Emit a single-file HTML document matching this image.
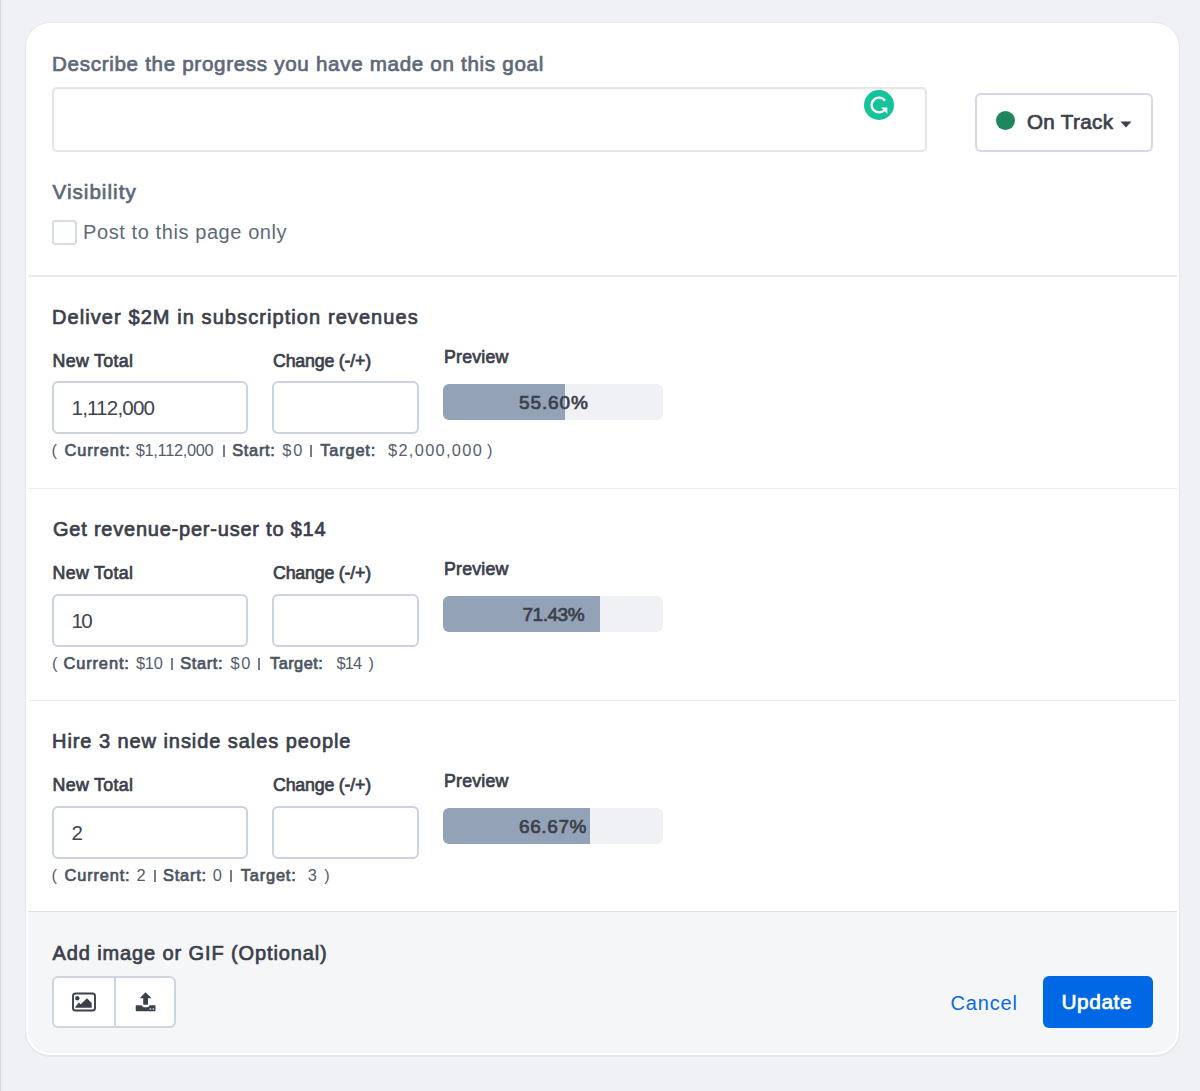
<!DOCTYPE html>
<html><head><meta charset="utf-8"><style>
html,body{margin:0;padding:0;}
body{width:1200px;height:1091px;background:#eff1f5;position:relative;overflow:hidden;font-family:"Liberation Sans",sans-serif;}
.edge{position:absolute;left:0;top:0;width:1px;height:1091px;background:#d2dae4;}
.edge2{position:absolute;left:1px;top:0;width:2px;height:1091px;background:#e9edf2;}
.card{position:absolute;left:24.5px;top:21.5px;width:1155.5px;height:1035.5px;border-radius:25px;background:#e5e7eb;}
.cardw{position:absolute;left:25.5px;top:23px;width:1153px;height:1031.5px;border-radius:24px;background:#fff;overflow:hidden;}
.footer{position:absolute;left:2.5px;top:888px;width:1149px;height:141px;background:#f5f6f8;border-top:1px solid #dce0e6;border-radius:0 0 22px 22px;}
.div1{position:absolute;left:28px;top:275px;width:1149px;height:2px;background:#e6e9ed;}
.div2{position:absolute;left:28px;width:1149px;height:1px;background:#eceef1;}
.t{position:absolute;white-space:pre;}
.t b{font-weight:700;color:#4d5665;}
.pipe{position:absolute;width:2px;height:11.5px;background:#737c89;}
.ta{position:absolute;box-sizing:border-box;left:52px;top:87px;width:875px;height:65px;border:2px solid #e6e6e6;border-radius:5px;background:#fff;box-shadow:inset 0 1px 2px rgba(0,0,0,0.04);}
.inp{position:absolute;box-sizing:border-box;border:2px solid #cad3df;border-radius:6px;background:#fff;}
.bar{position:absolute;width:220px;height:36px;border-radius:6px;background:#eff1f5;overflow:hidden;}
.fill{position:absolute;left:0;top:0;height:36px;background:#93a2b7;}
.btn{position:absolute;box-sizing:border-box;border:1.5px solid #c6cfdc;border-radius:6px;background:#fff;}
</style></head><body>
<div class="edge"></div><div class="edge2"></div>
<div class="card"></div>
<div class="cardw">
  <div class="footer"></div>
</div>
<div class="div1"></div>
<div class="ta"></div>
<svg style="position:absolute;left:864px;top:90px" width="30" height="30" viewBox="0 0 30 30">
  <circle cx="15" cy="15" r="15" fill="#15c39a"/>
  <path d="M21.06 10.76 A7.4 7.4 0 1 0 20.23 20.23" fill="none" stroke="#fff" stroke-width="2.4"/>
  <path d="M17.1 17.5 L23.3 17.5 L23.3 23.75 Z" fill="#fff"/>
</svg>
<div class="btn" style="left:975px;top:93px;width:178px;height:59px;border:2px solid #d2d9e4;"></div>
<div style="position:absolute;left:996px;top:111px;width:19px;height:19px;border-radius:50%;background:#1d875e"></div>
<svg style="position:absolute;left:1120px;top:121px" width="12" height="7" viewBox="0 0 12 7"><path d="M0.5 0.5 L11.5 0.5 L6 6.5 Z" fill="#3b404b"/></svg>
<div class="inp" style="left:52px;top:219.5px;width:25px;height:25px;border-radius:3px;border:2px solid #d5dce6"></div>

<div class="inp" style="left:52px;top:381px;width:196px;height:53px"></div>
<div class="inp" style="left:272px;top:381px;width:147px;height:53px"></div>
<div class="bar" style="left:443px;top:384px"><div class="fill" style="width:122.3px"></div></div>
<div class="div2" style="top:488px"></div>
<div class="inp" style="left:52px;top:594px;width:196px;height:53px"></div>
<div class="inp" style="left:272px;top:594px;width:147px;height:53px"></div>
<div class="bar" style="left:443px;top:596px"><div class="fill" style="width:157.1px"></div></div>
<div class="div2" style="top:700px"></div>
<div class="inp" style="left:52px;top:806px;width:196px;height:53px"></div>
<div class="inp" style="left:272px;top:806px;width:147px;height:53px"></div>
<div class="bar" style="left:443px;top:808px"><div class="fill" style="width:146.7px"></div></div>

<div class="btn" style="left:52px;top:976px;width:124px;height:52px;border:2px solid #cdd5e1;"></div>
<div style="position:absolute;left:114px;top:977px;width:2px;height:50px;background:#cdd5e1"></div>
<svg style="position:absolute;left:70px;top:990px" width="28" height="24" viewBox="0 0 28 24">
  <rect x="3" y="3.5" width="22" height="17" rx="2.6" fill="none" stroke="#3b404b" stroke-width="1.9"/>
  <circle cx="7.3" cy="8.2" r="2.2" fill="#3b404b"/>
  <path d="M5.3 17.7 L5.3 17 L8.8 12.5 L10.7 14.2 L17 8.2 L21.7 13 L21.7 17.7 Z" fill="#3b404b"/>
</svg>
<svg style="position:absolute;left:130px;top:990px" width="30" height="24" viewBox="0 0 30 24">
  <path d="M15.5 2.2 L21.5 8.3 L18 8.3 L18 14 Q18 14.7 17.3 14.7 L13.9 14.7 Q13.2 14.7 13.2 14 L13.2 8.3 L9.7 8.3 Z" fill="#3b404b"/>
  <path d="M5.7 16 Q5.7 15.2 6.5 15.2 L11 15.2 Q11.8 15.2 12.3 16 Q12.8 17.2 14 17.2 L17.5 17.2 Q18.6 17.2 19.1 16 Q19.6 15.2 20.4 15.2 L24.7 15.2 Q25.5 15.2 25.5 16 L25.5 20.4 Q25.5 21.2 24.7 21.2 L6.5 21.2 Q5.7 21.2 5.7 20.4 Z" fill="#3b404b"/>
  <rect x="19.6" y="18.2" width="1.6" height="1.6" fill="#c9ccd2"/>
  <rect x="22.6" y="18.2" width="1.6" height="1.6" fill="#c9ccd2"/>
</svg>
<div style="position:absolute;left:1043px;top:976px;width:110px;height:52px;border-radius:6px;background:#0067e5"></div>
<div class="pipe" style="left:222.8px;top:445px"></div><div class="pipe" style="left:310.3px;top:445px"></div><div class="pipe" style="left:171.3px;top:658px"></div><div class="pipe" style="left:257.9px;top:658px"></div><div class="pipe" style="left:153.8px;top:870px"></div><div class="pipe" style="left:230.3px;top:870px"></div><div class="t" id="t_desc" style="left:52.00px;top:54.16px;font-weight:400;-webkit-text-stroke:0.7px #5d6979;font-size:20.6px;line-height:20.6px;color:#5d6979;letter-spacing:0.685px">Describe the progress you have made on this goal</div><div class="t" id="t_vis" style="left:52.50px;top:181.86px;font-weight:400;-webkit-text-stroke:0.7px #5d6979;font-size:20.6px;line-height:20.6px;color:#5d6979;letter-spacing:1.022px">Visibility</div><div class="t" id="t_post" style="left:83.00px;top:222.27px;font-weight:400;font-size:20px;line-height:20px;color:#5d6979;letter-spacing:0.590px">Post to this page only</div><div class="t" id="t_ontrack" style="left:1027.00px;top:111.96px;font-weight:400;-webkit-text-stroke:0.7px #3b404b;font-size:20.6px;line-height:20.6px;color:#3b404b;letter-spacing:0.343px">On Track</div><div class="t" id="t_add" style="left:52.50px;top:942.67px;font-weight:400;-webkit-text-stroke:0.7px #3b404b;font-size:20px;line-height:20px;color:#3b404b;letter-spacing:0.885px">Add image or GIF (Optional)</div><div class="t" id="t_cancel" style="left:950.50px;top:992.57px;font-weight:400;font-size:20px;line-height:20px;color:#0b69df;letter-spacing:0.840px">Cancel</div><div class="t" id="t_update" style="left:1061.50px;top:991.69px;font-weight:400;-webkit-text-stroke:0.7px #ffffff;font-size:20.8px;line-height:20.8px;color:#ffffff;letter-spacing:0.600px">Update</div><div class="t" id="s0_title" style="left:52.00px;top:306.87px;font-weight:400;-webkit-text-stroke:0.7px #3b404b;font-size:20px;line-height:20px;color:#3b404b;letter-spacing:1.080px">Deliver $2M in subscription revenues</div><div class="t" id="s0_new" style="left:52.50px;top:352.83px;font-weight:400;-webkit-text-stroke:0.7px #3b404b;font-size:17.8px;line-height:17.8px;color:#3b404b;letter-spacing:0.325px">New Total</div><div class="t" id="s0_chg" style="left:273.00px;top:352.83px;font-weight:400;-webkit-text-stroke:0.7px #3b404b;font-size:17.8px;line-height:17.8px;color:#3b404b;letter-spacing:-0.200px">Change (-/+)</div><div class="t" id="s0_prev" style="left:444.00px;top:348.73px;font-weight:400;-webkit-text-stroke:0.7px #3b404b;font-size:17.8px;line-height:17.8px;color:#3b404b;letter-spacing:0.200px">Preview</div><div class="t" id="s0_val" style="left:71.50px;top:397.76px;font-weight:400;font-size:20.6px;line-height:20.6px;color:#3f4450;letter-spacing:-0.825px">1,112,000</div><div class="t" id="s0_pct" style="left:519.00px;top:392.67px;font-weight:400;-webkit-text-stroke:0.7px #3b404b;font-size:19px;line-height:19px;color:#3b404b;letter-spacing:0.880px">55.60%</div><div class="t" id="s0_ip0" style="left:51.50px;top:441.72px;font-weight:400;font-size:16.4px;line-height:16.4px;color:#545e6c;letter-spacing:0.000px">(</div><div class="t" id="s0_ip1" style="left:64.50px;top:441.72px;font-weight:400;-webkit-text-stroke:0.7px #4b5462;font-size:16.4px;line-height:16.4px;color:#4b5462;letter-spacing:0.857px">Current:</div><div class="t" id="s0_ip2" style="left:135.80px;top:441.72px;font-weight:400;font-size:16.4px;line-height:16.4px;color:#545e6c;letter-spacing:-0.328px">$1,112,000</div><div class="t" id="s0_ip4" style="left:232.20px;top:441.72px;font-weight:400;-webkit-text-stroke:0.7px #4b5462;font-size:16.4px;line-height:16.4px;color:#4b5462;letter-spacing:0.700px">Start:</div><div class="t" id="s0_ip5" style="left:282.20px;top:441.72px;font-weight:400;font-size:16.4px;line-height:16.4px;color:#545e6c;letter-spacing:2.000px">$0</div><div class="t" id="s0_ip7" style="left:320.20px;top:441.72px;font-weight:400;-webkit-text-stroke:0.7px #4b5462;font-size:16.4px;line-height:16.4px;color:#4b5462;letter-spacing:0.833px">Target:</div><div class="t" id="s0_ip8" style="left:388.00px;top:441.72px;font-weight:400;font-size:16.4px;line-height:16.4px;color:#545e6c;letter-spacing:1.311px">$2,000,000</div><div class="t" id="s0_ip9" style="left:487.00px;top:441.72px;font-weight:400;font-size:16.4px;line-height:16.4px;color:#545e6c;letter-spacing:0.000px">)</div><div class="t" id="s1_title" style="left:53.00px;top:518.87px;font-weight:400;-webkit-text-stroke:0.7px #3b404b;font-size:20px;line-height:20px;color:#3b404b;letter-spacing:0.777px">Get revenue-per-user to $14</div><div class="t" id="s1_new" style="left:52.50px;top:564.83px;font-weight:400;-webkit-text-stroke:0.7px #3b404b;font-size:17.8px;line-height:17.8px;color:#3b404b;letter-spacing:0.325px">New Total</div><div class="t" id="s1_chg" style="left:273.00px;top:564.83px;font-weight:400;-webkit-text-stroke:0.7px #3b404b;font-size:17.8px;line-height:17.8px;color:#3b404b;letter-spacing:-0.200px">Change (-/+)</div><div class="t" id="s1_prev" style="left:444.00px;top:560.73px;font-weight:400;-webkit-text-stroke:0.7px #3b404b;font-size:17.8px;line-height:17.8px;color:#3b404b;letter-spacing:0.200px">Preview</div><div class="t" id="s1_val" style="left:71.50px;top:610.76px;font-weight:400;font-size:20.6px;line-height:20.6px;color:#3f4450;letter-spacing:-1.800px">10</div><div class="t" id="s1_pct" style="left:522.50px;top:604.67px;font-weight:400;-webkit-text-stroke:0.7px #3b404b;font-size:19px;line-height:19px;color:#3b404b;letter-spacing:-0.480px">71.43%</div><div class="t" id="s1_ip0" style="left:52.00px;top:654.72px;font-weight:400;font-size:16.4px;line-height:16.4px;color:#545e6c;letter-spacing:0.000px">(</div><div class="t" id="s1_ip1" style="left:63.40px;top:654.72px;font-weight:400;-webkit-text-stroke:0.7px #4b5462;font-size:16.4px;line-height:16.4px;color:#4b5462;letter-spacing:0.900px">Current:</div><div class="t" id="s1_ip2" style="left:136.00px;top:654.72px;font-weight:400;font-size:16.4px;line-height:16.4px;color:#545e6c;letter-spacing:-0.300px">$10</div><div class="t" id="s1_ip4" style="left:180.20px;top:654.72px;font-weight:400;-webkit-text-stroke:0.7px #4b5462;font-size:16.4px;line-height:16.4px;color:#4b5462;letter-spacing:0.640px">Start:</div><div class="t" id="s1_ip5" style="left:230.40px;top:654.72px;font-weight:400;font-size:16.4px;line-height:16.4px;color:#545e6c;letter-spacing:1.800px">$0</div><div class="t" id="s1_ip7" style="left:270.00px;top:654.72px;font-weight:400;-webkit-text-stroke:0.7px #4b5462;font-size:16.4px;line-height:16.4px;color:#4b5462;letter-spacing:0.450px">Target:</div><div class="t" id="s1_ip8" style="left:336.40px;top:654.72px;font-weight:400;font-size:16.4px;line-height:16.4px;color:#545e6c;letter-spacing:-0.750px">$14</div><div class="t" id="s1_ip9" style="left:368.60px;top:654.72px;font-weight:400;font-size:16.4px;line-height:16.4px;color:#545e6c;letter-spacing:0.000px">)</div><div class="t" id="s2_title" style="left:52.00px;top:730.87px;font-weight:400;-webkit-text-stroke:0.7px #3b404b;font-size:20px;line-height:20px;color:#3b404b;letter-spacing:0.938px">Hire 3 new inside sales people</div><div class="t" id="s2_new" style="left:52.50px;top:776.83px;font-weight:400;-webkit-text-stroke:0.7px #3b404b;font-size:17.8px;line-height:17.8px;color:#3b404b;letter-spacing:0.325px">New Total</div><div class="t" id="s2_chg" style="left:273.00px;top:776.83px;font-weight:400;-webkit-text-stroke:0.7px #3b404b;font-size:17.8px;line-height:17.8px;color:#3b404b;letter-spacing:-0.200px">Change (-/+)</div><div class="t" id="s2_prev" style="left:444.00px;top:772.73px;font-weight:400;-webkit-text-stroke:0.7px #3b404b;font-size:17.8px;line-height:17.8px;color:#3b404b;letter-spacing:0.200px">Preview</div><div class="t" id="s2_val" style="left:71.50px;top:822.76px;font-weight:400;font-size:20.6px;line-height:20.6px;color:#3f4450;letter-spacing:0.000px">2</div><div class="t" id="s2_pct" style="left:519.00px;top:816.67px;font-weight:400;-webkit-text-stroke:0.7px #3b404b;font-size:19px;line-height:19px;color:#3b404b;letter-spacing:0.600px">66.67%</div><div class="t" id="s2_ip0" style="left:51.50px;top:866.72px;font-weight:400;font-size:16.4px;line-height:16.4px;color:#545e6c;letter-spacing:0.000px">(</div><div class="t" id="s2_ip1" style="left:64.50px;top:866.72px;font-weight:400;-webkit-text-stroke:0.7px #4b5462;font-size:16.4px;line-height:16.4px;color:#4b5462;letter-spacing:0.850px">Current:</div><div class="t" id="s2_ip2" style="left:136.50px;top:866.72px;font-weight:400;font-size:16.4px;line-height:16.4px;color:#545e6c;letter-spacing:0.000px">2</div><div class="t" id="s2_ip4" style="left:163.00px;top:866.72px;font-weight:400;-webkit-text-stroke:0.7px #4b5462;font-size:16.4px;line-height:16.4px;color:#4b5462;letter-spacing:0.800px">Start:</div><div class="t" id="s2_ip5" style="left:212.80px;top:866.72px;font-weight:400;font-size:16.4px;line-height:16.4px;color:#545e6c;letter-spacing:0.000px">0</div><div class="t" id="s2_ip7" style="left:240.80px;top:866.72px;font-weight:400;-webkit-text-stroke:0.7px #4b5462;font-size:16.4px;line-height:16.4px;color:#4b5462;letter-spacing:0.800px">Target:</div><div class="t" id="s2_ip8" style="left:307.80px;top:866.72px;font-weight:400;font-size:16.4px;line-height:16.4px;color:#545e6c;letter-spacing:0.000px">3</div><div class="t" id="s2_ip9" style="left:324.20px;top:866.72px;font-weight:400;font-size:16.4px;line-height:16.4px;color:#545e6c;letter-spacing:0.000px">)</div>
</body></html>
